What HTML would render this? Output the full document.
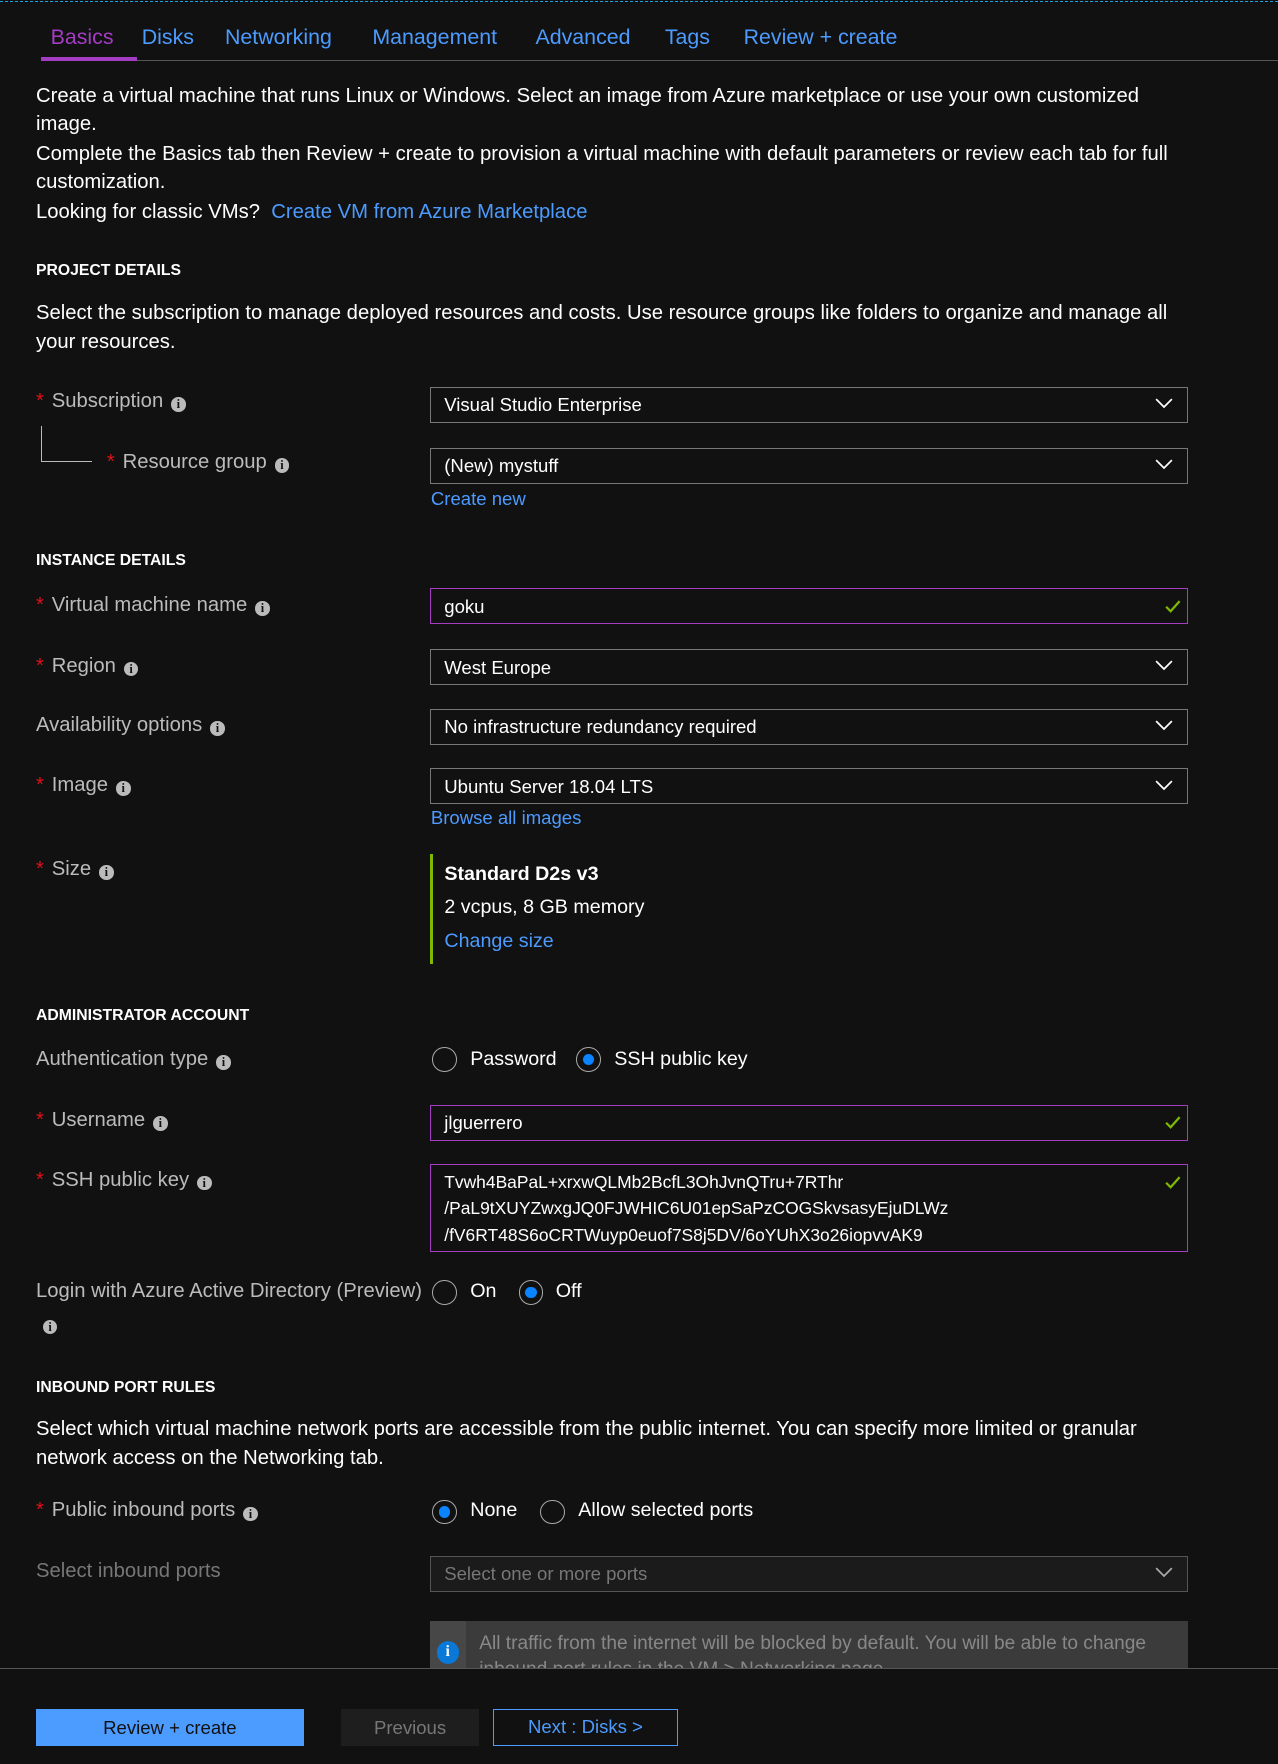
<!DOCTYPE html>
<html><head><meta charset="utf-8"><style>
html,body{margin:0;padding:0;background:#111;overflow:hidden}
body{width:1278px;height:1764px}
#w{position:relative;width:1136px;height:1568px;zoom:1.125;background:#111;font-family:"Liberation Sans",sans-serif;font-size:18px;color:#fff}
.a{position:absolute;white-space:nowrap;line-height:24px;height:24px}
.lbl{color:#bbb}
.st{color:#e0111b;margin-right:7px}
.h{font-weight:bold;font-size:14px}
.lnk{color:#4c9bff;font-size:16.5px}
.rl{font-size:17.5px}
.box{position:absolute;left:382px;width:672px;height:30px;border:1px solid #777;box-sizing:content-box;font-size:16.5px}
.box span{position:absolute;left:12px;top:3px;line-height:24px;white-space:nowrap}
.chev{position:absolute;right:12px;top:9px;width:16px;height:10px}
.chk{position:absolute;right:5px;top:9px;width:14px;height:12px}
.i{display:inline-block;width:13px;height:13px;border-radius:50%;background:#bbb;color:#111;font-size:11px;line-height:13px;text-align:center;font-weight:bold;font-family:"Liberation Serif",serif;vertical-align:-1px;margin-left:7px}
.r{position:absolute;width:22px;height:22px;border:1px solid #aaa;border-radius:50%;box-sizing:border-box}
.r.on::after{content:"";position:absolute;left:5px;top:5px;width:10px;height:10px;border-radius:50%;background:#0a84ff}
.tab{position:absolute;top:21px;line-height:24px;font-size:19px;color:#4c9bff}
</style></head><body><div id="w">
<div style="position:absolute;left:0;top:1px;width:1136px;border-top:1px dashed #1ba1e2"></div>
<div class="tab" style="left:45px;color:#a43cc4">Basics</div>
<div class="tab" style="left:126px">Disks</div>
<div class="tab" style="left:200px">Networking</div>
<div class="tab" style="left:331px">Management</div>
<div class="tab" style="left:476px">Advanced</div>
<div class="tab" style="left:591px">Tags</div>
<div class="tab" style="left:661px">Review + create</div>
<div style="position:absolute;left:36px;top:53px;width:1100px;height:1px;background:#555"></div>
<div style="position:absolute;left:36px;top:51px;width:86px;height:3px;background:#a43cc4"></div>

<div class="a" style="left:32px;top:74px">Create a virtual machine that runs Linux or Windows. Select an image from Azure marketplace or use your own customized</div>
<div class="a" style="left:32px;top:99px">image.</div>
<div class="a" style="left:32px;top:125px">Complete the Basics tab then Review + create to provision a virtual machine with default parameters or review each tab for full</div>
<div class="a" style="left:32px;top:150px">customization.</div>
<div class="a" style="left:32px;top:177px">Looking for classic VMs? &nbsp;<span class="lnk" style="font-size:18px">Create VM from Azure Marketplace</span></div>

<div class="a h" style="left:32px;top:228px">PROJECT DETAILS</div>
<div class="a" style="left:32px;top:267px">Select the subscription to manage deployed resources and costs. Use resource groups like folders to organize and manage all</div>
<div class="a" style="left:32px;top:292px">your resources.</div>

<div class="a lbl" style="left:32px;top:345px"><span class="st">*</span>Subscription<span class="i">i</span></div>
<div class="box" style="top:344px"><span>Visual Studio Enterprise</span><svg class="chev" viewBox="0 0 16 10"><path d="M1 1l7 7 7-7" fill="none" stroke="#fff" stroke-width="1.5"/></svg></div>
<div style="position:absolute;left:36px;top:379px;width:45px;height:31px;border-left:1px solid #bbb;border-bottom:1px solid #bbb"></div>
<div class="a lbl" style="left:95px;top:399px"><span class="st">*</span>Resource group<span class="i">i</span></div>
<div class="box" style="top:398px"><span>(New) mystuff</span><svg class="chev" viewBox="0 0 16 10"><path d="M1 1l7 7 7-7" fill="none" stroke="#fff" stroke-width="1.5"/></svg></div>
<div class="a lnk" style="left:383px;top:431px">Create new</div>

<div class="a h" style="left:32px;top:486px">INSTANCE DETAILS</div>
<div class="a lbl" style="left:32px;top:526px"><span class="st">*</span>Virtual machine name<span class="i">i</span></div>
<div class="box" style="top:523px;border-color:#a43cc4"><span>goku</span><svg class="chk" viewBox="0 0 14 12"><path d="M1 6l4 4 8-9" fill="none" stroke="#7fba00" stroke-width="2"/></svg></div>
<div class="a lbl" style="left:32px;top:580px"><span class="st">*</span>Region<span class="i">i</span></div>
<div class="box" style="top:577px"><span>West Europe</span><svg class="chev" viewBox="0 0 16 10"><path d="M1 1l7 7 7-7" fill="none" stroke="#fff" stroke-width="1.5"/></svg></div>
<div class="a lbl" style="left:32px;top:633px">Availability options<span class="i">i</span></div>
<div class="box" style="top:630px"><span>No infrastructure redundancy required</span><svg class="chev" viewBox="0 0 16 10"><path d="M1 1l7 7 7-7" fill="none" stroke="#fff" stroke-width="1.5"/></svg></div>
<div class="a lbl" style="left:32px;top:686px"><span class="st">*</span>Image<span class="i">i</span></div>
<div class="box" style="top:683px"><span>Ubuntu Server 18.04 LTS</span><svg class="chev" viewBox="0 0 16 10"><path d="M1 1l7 7 7-7" fill="none" stroke="#fff" stroke-width="1.5"/></svg></div>
<div class="a lnk" style="left:383px;top:715px">Browse all images</div>

<div class="a lbl" style="left:32px;top:761px"><span class="st">*</span>Size<span class="i">i</span></div>
<div style="position:absolute;left:382px;top:759px;width:3px;height:98px;background:#7fba00"></div>
<div class="a rl" style="left:395px;top:765px;font-weight:bold">Standard D2s v3</div>
<div class="a rl" style="left:395px;top:795px">2 vcpus, 8 GB memory</div>
<div class="a lnk rl" style="left:395px;top:825px;font-size:17.5px">Change size</div>

<div class="a h" style="left:32px;top:891px">ADMINISTRATOR ACCOUNT</div>
<div class="a lbl" style="left:32px;top:930px">Authentication type<span class="i">i</span></div>
<div class="r" style="left:384px;top:931px"></div><div class="a rl" style="left:418px;top:930px">Password</div>
<div class="r on" style="left:512px;top:931px"></div><div class="a rl" style="left:546px;top:930px">SSH public key</div>

<div class="a lbl" style="left:32px;top:984px"><span class="st">*</span>Username<span class="i">i</span></div>
<div class="box" style="top:982px;border-color:#a43cc4"><span>jlguerrero</span><svg class="chk" viewBox="0 0 14 12"><path d="M1 6l4 4 8-9" fill="none" stroke="#7fba00" stroke-width="2"/></svg></div>
<div class="a lbl" style="left:32px;top:1037px"><span class="st">*</span>SSH public key<span class="i">i</span></div>
<div class="box" style="top:1035px;height:76px;border-color:#a43cc4"><span style="top:3px;line-height:23.5px;font-size:15.5px">Tvwh4BaPaL+xrxwQLMb2BcfL3OhJvnQTru+7RThr<br>/PaL9tXUYZwxgJQ0FJWHIC6U01epSaPzCOGSkvsasyEjuDLWz<br>/fV6RT48S6oCRTWuyp0euof7S8j5DV/6oYUhX3o26iopvvAK9</span><svg class="chk" viewBox="0 0 14 12"><path d="M1 6l4 4 8-9" fill="none" stroke="#7fba00" stroke-width="2"/></svg></div>

<div class="a lbl" style="left:32px;top:1136px">Login with Azure Active Directory (Preview)</div>
<div class="a" style="left:32px;top:1165px"><span class="i" style="margin-left:6px">i</span></div>
<div class="r" style="left:384px;top:1138px"></div><div class="a rl" style="left:418px;top:1136px">On</div>
<div class="r on" style="left:461px;top:1138px"></div><div class="a rl" style="left:494px;top:1136px">Off</div>

<div class="a h" style="left:32px;top:1221px">INBOUND PORT RULES</div>
<div class="a" style="left:32px;top:1259px">Select which virtual machine network ports are accessible from the public internet. You can specify more limited or granular</div>
<div class="a" style="left:32px;top:1284px">network access on the Networking tab.</div>
<div class="a lbl" style="left:32px;top:1331px"><span class="st">*</span>Public inbound ports<span class="i">i</span></div>
<div class="r on" style="left:384px;top:1333px"></div><div class="a rl" style="left:418px;top:1331px">None</div>
<div class="r" style="left:480px;top:1333px"></div><div class="a rl" style="left:514px;top:1331px">Allow selected ports</div>
<div class="a" style="left:32px;top:1385px;color:#777">Select inbound ports</div>
<div class="box" style="top:1383px;background:#1b1b1b;border-color:#555"><span style="color:#777">Select one or more ports</span><svg class="chev" viewBox="0 0 16 10"><path d="M1 1l7 7 7-7" fill="none" stroke="#aaa" stroke-width="1.5"/></svg></div>
<div style="position:absolute;left:382px;top:1441px;width:674px;height:42px;background:#3b3b3b;overflow:hidden">
 <div style="position:absolute;left:0;top:0;width:32px;height:42px;background:#474747"></div>
 <div style="position:absolute;left:6px;top:18px;width:20px;height:20px;border-radius:50%;background:#0a78d7;color:#fff;font-weight:bold;font-size:14px;line-height:20px;text-align:center;font-family:'Liberation Serif',serif">i</div>
 <div class="a" style="left:44px;top:8px;color:#888;font-size:17px">All traffic from the internet will be blocked by default. You will be able to change</div>
 <div class="a" style="left:44px;top:31px;color:#888;font-size:17px">inbound port rules in the VM &gt; Networking page.</div>
</div>
<div style="position:absolute;left:0;top:1483px;width:1136px;height:85px;background:#111;border-top:1px solid #555"></div>
<div style="position:absolute;left:32px;top:1519px;width:238px;height:33px;background:#4c9bff;color:#111;text-align:center;line-height:33px;font-size:16.5px">Review + create</div>
<div style="position:absolute;left:303px;top:1519px;width:123px;height:33px;background:#1e1e1e;color:#777;text-align:center;line-height:33px;font-size:16.5px">Previous</div>
<div style="position:absolute;left:438px;top:1519px;width:163px;height:31px;border:1px solid #4c9bff;color:#4c9bff;text-align:center;line-height:31px;font-size:16.5px">Next : Disks &gt;</div>
</div></body></html>
